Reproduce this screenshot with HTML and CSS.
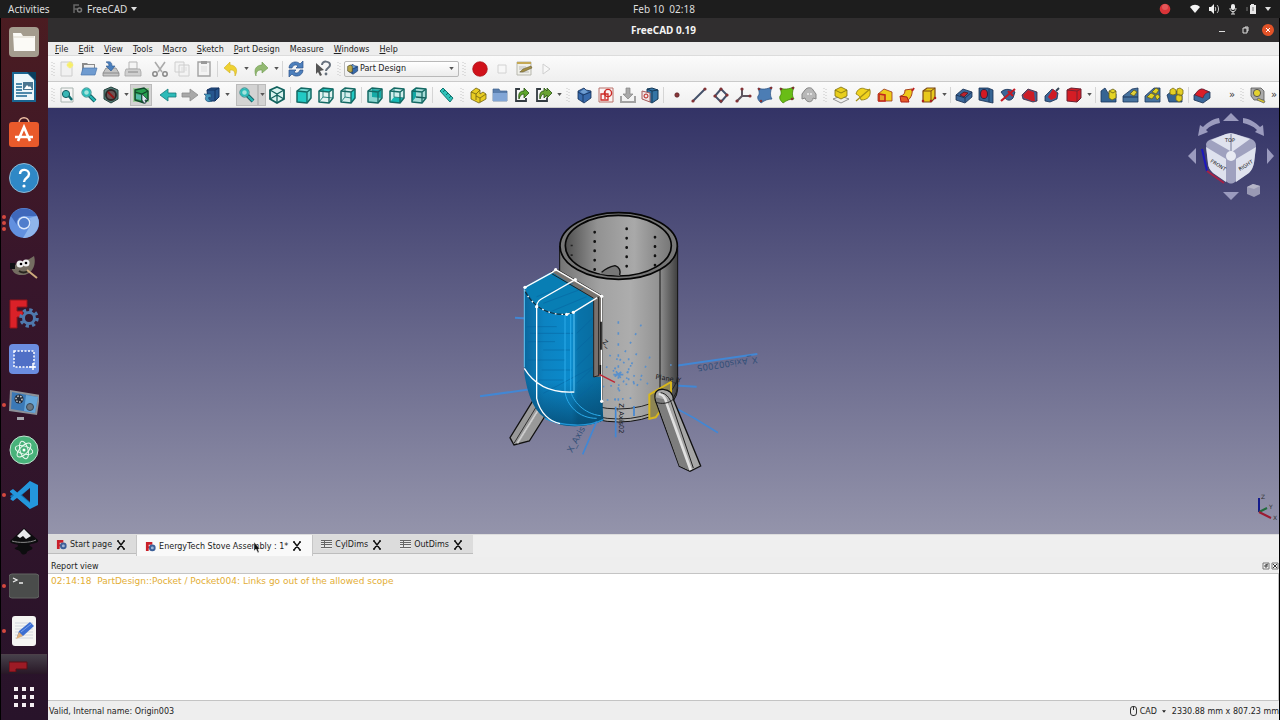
FILE: index.html
```html
<!DOCTYPE html>
<html lang="en">
<head>
    <meta charset="UTF-8">
    <meta name="viewport" content="width=device-width, initial-scale=1.0">
    <title>FreeCAD 0.19</title>
    <link rel="stylesheet" href="styles.css">
</head>
<body>
    <!-- Icon set -->
    <svg class="sprite" aria-hidden="true">
        <symbol id="new" viewBox="0 0 18 18"><path d="M3 2h11v14H3z" fill="#f1f1f1" stroke="#ccc"/><path d="M12 1l1 3 3 1-3 1-1 3-1-3-3-1 3-1z" fill="#f7ec50"/><circle cx="12" cy="5" r="3" fill="#f8ef6a" opacity=".8"/></symbol>
        <symbol id="open" viewBox="0 0 18 18"><path d="M2 3h5l1 1h7v11H2z" fill="#8a8a8a"/><path d="M4 5h10v5H4z" fill="#eee"/><path d="M3 8h14l-2 7H1z" fill="#6f9bd0" stroke="#4a76ae" stroke-width=".7"/></symbol>
        <symbol id="save" viewBox="0 0 18 18"><path d="M4 8h10l3 5v3H1v-3z" fill="#c4c4c4" stroke="#858585" stroke-width=".8"/><path d="M1 13h16" stroke="#8a8a8a"/><path d="M4 2c4-1 6 0 6 4h3l-4 5-5-5h3c0-2-1-3-3-4z" fill="#4a7fbd" stroke="#2a548b" stroke-width=".6"/></symbol>
        <symbol id="print" viewBox="0 0 18 18"><path d="M5 2h8v7H5z" fill="#f4f4f4" stroke="#b5b5b5"/><path d="M2 9h14l1 3v4H1v-4z" fill="#cfcfcf" stroke="#a5a5a5" stroke-width=".8"/><path d="M4 12h10" stroke="#888"/></symbol>
        <symbol id="cut" viewBox="0 0 18 18"><path d="M4 2l7 10M14 2L7 12" stroke="#aaa" stroke-width="1.6"/><circle cx="4" cy="14" r="2.2" fill="none" stroke="#888" stroke-width="1.5"/><circle cx="14" cy="14" r="2.2" fill="none" stroke="#888" stroke-width="1.5"/></symbol>
        <symbol id="copy" viewBox="0 0 18 18"><path d="M2 2h9v10H2zM6 5h10v11H6z" fill="#f3f3f3" stroke="#cecece"/><path d="M8 8h6M8 10h6M8 12h4" stroke="#ddd"/></symbol>
        <symbol id="paste" viewBox="0 0 18 18"><path d="M3 2h12v14H3z" fill="#f3f3f3" stroke="#a2a2a2" stroke-width="1.4"/><path d="M6 1h6v3H6z" fill="#999"/><path d="M6 7h6M6 9h6M6 11h6" stroke="#ddd"/></symbol>
        <symbol id="undo" viewBox="0 0 18 18"><path d="M2 8l6-6v3c5 0 9 4 5 11 0-5-1-6-5-6v3z" fill="#efd233" stroke="#cfae20" stroke-width=".6"/></symbol>
        <symbol id="redo" viewBox="0 0 18 18"><path d="M16 8l-6-6v3c-5 0-9 4-6 11 0-5 2-6 6-6v3z" fill="#93b972" stroke="#6d9a4d" stroke-width=".6"/></symbol>
        <symbol id="refresh" viewBox="0 0 18 18"><path d="M2 8c0-6 8-8 11-4l3-3v7H9l2-2C9 4 6 5 5 8zM16 10c0 6-8 8-11 4l-3 3v-7h7l-2 2c2 2 5 1 6-2z" fill="#4d80bd" stroke="#2d5289" stroke-width=".7"/></symbol>
        <symbol id="whats" viewBox="0 0 18 18"><path d="M2 3l8 7-4 1 2 4-2 1-2-4-2 2z" fill="#555"/><path d="M8 5c0-5 8-4 8 0 0 3-4 3-4 6" fill="none" stroke="#66707c" stroke-width="2"/><circle cx="12" cy="14" r="1.4" fill="#66707c"/></symbol>
        <symbol id="record" viewBox="0 0 18 18"><circle cx="9" cy="9" r="7.3" fill="#d0111a" stroke="#a70e14" stroke-width=".7"/></symbol>
        <symbol id="stop" viewBox="0 0 18 18"><path d="M5 5h8v8H5z" fill="#f7f7f7" stroke="#d2d2d2"/></symbol>
        <symbol id="macro" viewBox="0 0 18 18"><path d="M2 2h14v13H2z" fill="#f0f0e9" stroke="#b7b7ae"/><path d="M2 2h14v2H2z" fill="#c5a954"/><path d="M4 7h7M4 9h5M4 12h10" stroke="#bbb"/><path d="M5 12l3-3 8-3 1 2-9 4z" fill="#a28d44" stroke="#5d522a" stroke-width=".5"/></symbol>
        <symbol id="play" viewBox="0 0 18 18"><path d="M6 4l7 5-7 5z" fill="#f7f7f7" stroke="#cfcfcf"/></symbol>

        <symbol id="fitall" viewBox="0 0 18 18"><path d="M3 2h12v14H3z" fill="#f5f5f5" stroke="#a9b4b0"/><path d="M10 9l4 5" stroke="#0d6f70" stroke-width="2.4"/><circle cx="8" cy="8" r="3.6" fill="#38b7b5" stroke="#135c60"/></symbol>
        <symbol id="zoom" viewBox="0 0 18 18"><path d="M9 9l6 6" stroke="#135c60" stroke-width="4"/><path d="M10 10l5 5" stroke="#25b4b3" stroke-width="2.400"/><circle cx="6.500" cy="6.500" r="4.600" fill="#a4e3dd" stroke="#2a8284"/><circle cx="6.500" cy="6.500" r="3.200" fill="none" stroke="#2abbb8" stroke-width="1.800"/></symbol>
        <symbol id="draw" viewBox="0 0 18 18"><path d="M9 1l7 3v9l-7 4-7-4V4z" fill="#4e7a75" stroke="#27403d"/><circle cx="9" cy="9" r="5" fill="#6b5555" stroke="#2c2525" stroke-width="1.800"/><path d="M6 6l6 6" stroke="#951616" stroke-width="2"/></symbol>
        <symbol id="bbox" viewBox="0 0 18 18"><path d="M1 2h16v14H1z" fill="#9fd09b"/><path d="M3 4l9-2 4 3v9l-4 3-9-3z" fill="#289f50" stroke="#11482c" stroke-width="1.400"/><path d="M3 6l7 2 6-3M10 8v8" fill="none" stroke="#11482c" stroke-width="1.200"/><path d="M4 8l5 1v5l-5-1z" fill="#55b9a8"/><path d="M10 8l6 6-3 0 1 3-2 0-2-3z" fill="#dfe9ef" stroke="#234" stroke-width=".7"/></symbol>
        <symbol id="back" viewBox="0 0 18 18"><path d="M1 9l8-6v4h8v4H9v4z" fill="#2dbbb9" stroke="#14787a" stroke-width=".8"/></symbol>
        <symbol id="forward" viewBox="0 0 18 18"><path d="M17 9L9 3v4H1v4h8v4z" fill="#a8a8a8" stroke="#8c8c8c" stroke-width=".8"/></symbol>
        <symbol id="link" viewBox="0 0 18 18"><path d="M4 4l4-2h8v9l-4 4H5z" fill="#27568f" stroke="#143260"/><path d="M4 4h8l4-2M12 4v10" fill="none" stroke="#143260"/><path d="M8 8v4l-2-1c-1 2 0 3 3 4-5 2-8-1-6-5L1 8z" fill="#4496be" stroke="#17466c" stroke-width=".6"/></symbol>
        <symbol id="iso" viewBox="0 0 18 18"><path d="M9 1l7 3v9l-7 4-7-4V4z" fill="#d9f3f0" stroke="#12625e" stroke-width="1.800"/><path d="M2 4l7 4 7-4M9 8v9M2 13l7-4 7 4" fill="none" stroke="#12625e" stroke-width="1.300"/></symbol>
        <symbol id="wire" viewBox="0 0 18 18"><path d="M2 5l4-3 10 1v9l-4 5-10-1z" fill="none" stroke="#146964" stroke-width="1.500" stroke-linejoin="round"/><path d="M2 5l10 1 4-3M12 6v11" fill="none" stroke="#146964" stroke-width="1.300"/></symbol>
        <symbol id="v1" viewBox="0 0 18 18"><path d="M2 5l4-3 10 1v9l-4 5-10-1z" fill="#74dbd5"/><path d="M2 5l10 1v11L2 16z" fill="#22c9c4"/><use href="#wire"/></symbol>
        <symbol id="v2" viewBox="0 0 18 18"><path d="M2 5l4-3 10 1v9l-4 5-10-1z" fill="#e3f3f1"/><path d="M2 5l4-3 10 1-4 3z" fill="#22c9c4"/><path d="M6 3v8l10 1M6 11l-4 5" fill="none" stroke="#2c8883"/><use href="#wire"/></symbol>
        <symbol id="v3" viewBox="0 0 18 18"><path d="M2 5l4-3 10 1v9l-4 5-10-1z" fill="#d4efed"/><path d="M12 6l4-3v9l-4 5z" fill="#22c9c4"/><path d="M6 3v8l6 1M6 11l-4 5" fill="none" stroke="#2c8883"/><use href="#wire"/></symbol>
        <symbol id="v4" viewBox="0 0 18 18"><path d="M2 5l4-3 10 1v9l-4 5-10-1z" fill="#8ad5d0"/><path d="M6 3l9 1v8l-9-1z" fill="#15aaa6"/><use href="#wire"/></symbol>
        <symbol id="v5" viewBox="0 0 18 18"><path d="M2 5l4-3 10 1v9l-4 5-10-1z" fill="#d1efed"/><path d="M2 16l4-5 10 1-4 5z" fill="#15b9b4"/><path d="M6 3v8l10 1" fill="none" stroke="#2c8883"/><use href="#wire"/></symbol>
        <symbol id="v6" viewBox="0 0 18 18"><path d="M2 5l4-3 10 1v9l-4 5-10-1z" fill="#a7ddd9"/><path d="M2 5l4-3v9l-4 5z" fill="#12a7a4"/><path d="M6 11l10 1" stroke="#165e5b" stroke-width="1.500"/><use href="#wire"/></symbol>
        <symbol id="ruler" viewBox="0 0 18 18"><path d="M3 5l3-3 10 10-3 4z" fill="#2fc1b8" stroke="#137570"/><path d="M8 4L6 6M11 7l-2 2M14 10l-2 2" stroke="#137570"/></symbol>

        <symbol id="part" viewBox="0 0 18 18"><path d="M2 6l5-4 4 2v4l3-2 3 2v5l-7 4-8-4z" fill="#e8cc22" stroke="#6f6110" stroke-width=".8"/><path d="M2 6l5 2 4-4M7 8v6M7 10l4 2 6-4M11 12v4" fill="none" stroke="#6f6110" stroke-width=".8"/></symbol>
        <symbol id="group" viewBox="0 0 18 18"><path d="M2 3h6l1 2h7v10H2z" fill="#5a7fae" stroke="#40628e" stroke-width=".7"/><path d="M2 7h14v8H2z" fill="#82a6d6"/></symbol>
        <symbol id="export" viewBox="0 0 18 18"><path d="M7 3H3v12h10v-3" fill="none" stroke="#333b42" stroke-width="1.800"/><path d="M6 13c-1-6 1-8 5-8V2l5 5-5 5V8C8 8 7 10 6 13z" fill="#5ea52d" stroke="#26500f" stroke-width=".8"/></symbol>
        <symbol id="exports" viewBox="0 0 18 18"><path d="M6 3H2v12h10v-3" fill="none" stroke="#333b42" stroke-width="1.800"/><path d="M5 13c-1-6 1-8 4-8V2l3 3V2l5 5-5 5V9l-3 3V8C7 8 6 10 5 13z" fill="#69a332" stroke="#26500f" stroke-width=".8"/></symbol>
        <symbol id="body" viewBox="0 0 18 18"><path d="M3 5l6-3 2 2 5 1v7l-7 5-6-4z" fill="#386aab" stroke="#132d55" stroke-width=".8"/><path d="M3 6l5 3v7M8 9l8-3" fill="none" stroke="#132d55" stroke-width=".8"/><path d="M5 6l4-3 4 3-4 2z" fill="#6f9ed1"/></symbol>
        <symbol id="sketch" viewBox="0 0 18 18"><path d="M2 2h14v14H2z" fill="#faf3f2" stroke="#b9716b"/><circle cx="11" cy="7" r="3.600" fill="none" stroke="#cc2b27" stroke-width="1.400"/><path d="M4 8h7v6H4zM8 5v8" fill="none" stroke="#cc2b27" stroke-width="1.300"/></symbol>
        <symbol id="import" viewBox="0 0 18 18"><path d="M2 10v6h14v-6" fill="none" stroke="#a2a2a2" stroke-width="2"/><path d="M7 2h4v6h3l-5 5-5-5h3z" fill="#aaa" stroke="#858585" stroke-width=".7"/></symbol>
        <symbol id="map" viewBox="0 0 18 18"><path d="M6 3l5-1 6 2v9l-6 4-5-3z" fill="#3474a5" stroke="#143857"/><path d="M11 5v11M6 3l5 2 6-1" fill="none" stroke="#143857"/><path d="M1 5l8 2v9l-8-3z" fill="#efe3e4" stroke="#a55c5c"/><circle cx="5" cy="10" r="2" fill="none" stroke="#b8201c"/></symbol>
        <symbol id="point" viewBox="0 0 18 18"><circle cx="9" cy="9" r="2.200" fill="#893639" stroke="#592326" stroke-width=".7"/></symbol>
        <symbol id="line" viewBox="0 0 18 18"><path d="M3 15L15 3" stroke="#44516a" stroke-width="2"/><circle cx="3" cy="15" r="1.600" fill="#823235"/><circle cx="15" cy="3" r="1.600" fill="#823235"/></symbol>
        <symbol id="plane" viewBox="0 0 18 18"><path d="M3 10l6-7 6 6-6 7z" fill="none" stroke="#44516a" stroke-width="2"/><circle cx="3" cy="10" r="1.600" fill="#823235"/><circle cx="9" cy="3" r="1.600" fill="#823235"/><circle cx="15" cy="9" r="1.600" fill="#823235"/><circle cx="9" cy="15" r="1.600" fill="#823235"/></symbol>
        <symbol id="lcs" viewBox="0 0 18 18"><path d="M8 3v7l-5 5M8 10h8" fill="none" stroke="#5f5660" stroke-width="2"/><circle cx="8" cy="3" r="1.600" fill="#823235"/><circle cx="3" cy="15" r="1.600" fill="#823235"/><circle cx="16" cy="10" r="1.600" fill="#823235"/></symbol>
        <symbol id="shape" viewBox="0 0 18 18"><path d="M2 2c4 2 9 1 14-1-2 5-2 9 0 12-4 0-7 1-11 4-2-2-4-4-3-7 2-2 1-5 0-8z" fill="#4c7db4" stroke="#325989" stroke-width=".8"/><circle cx="3" cy="3" r="1.300" fill="#823235"/><circle cx="15" cy="2" r="1.300" fill="#823235"/><circle cx="5" cy="15" r="1.300" fill="#823235"/></symbol>
        <symbol id="subshape" viewBox="0 0 18 18"><path d="M2 2c4 2 9 1 14-1-2 5-2 9 0 12-4 0-7 1-11 4-2-2-4-4-3-7 2-2 1-5 0-8z" fill="#69bd16" stroke="#438109" stroke-width=".8"/><circle cx="3" cy="3" r="1.300" fill="#823235"/><circle cx="15" cy="2" r="1.300" fill="#823235"/><circle cx="14" cy="13" r="1.300" fill="#823235"/></symbol>
        <symbol id="clone" viewBox="0 0 18 18"><path d="M5 4c2-3 7-3 8 0l3 4v5l-3-1c0 5-7 5-8 0l-3 1V8z" fill="#b8b8b8" stroke="#868686"/><circle cx="8" cy="8" r="1" fill="#eee"/><circle cx="11" cy="8" r="1" fill="#eee"/></symbol>

        <symbol id="pad" viewBox="0 0 18 18"><path d="M1 13l8-3 8 3-8 4z" fill="#eee" stroke="#777" stroke-width=".8"/><path d="M3 4l6-3 6 3v6l-6 3-6-3z" fill="#e8ce1d" stroke="#796b10" stroke-width=".8"/><path d="M3 4l6 3 6-3" fill="none" stroke="#796b10" stroke-width=".8"/></symbol>
        <symbol id="revolve" viewBox="0 0 18 18"><path d="M2 8c1-5 6-7 9-5l5 1c1 6-2 10-9 10-1-4-3-5-5-6z" fill="#f0d31f" stroke="#87740d" stroke-width=".8"/><path d="M2 15L16 3" stroke="#a48f16" stroke-width="1.300"/></symbol>
        <symbol id="loft" viewBox="0 0 18 18"><path d="M2 8l6-5 8 3v9H2z" fill="#edcb1c" stroke="#9a361f" stroke-width=".8"/><path d="M3 8l6 1v6H3z" fill="#e5a32b" stroke="#c2251e" stroke-width="1.600"/></symbol>
        <symbol id="pipe" viewBox="0 0 18 18"><path d="M3 10c3-1 4-3 4-6l7-1c1 6-2 10-6 13z" fill="#edc91c" stroke="#a63d1d"/><path d="M2 10l7 1 2 5-8 0z" fill="#e55a28" stroke="#a91d17"/><path d="M14 5l2-3" stroke="#b22" stroke-width="2"/></symbol>
        <symbol id="box" viewBox="0 0 18 18"><path d="M3 5l4-3h8v10l-4 4H3z" fill="#e8c91d" stroke="#7c4b16" stroke-width="1.200"/><path d="M3 5h8l4-3M11 5v11" fill="none" stroke="#7c4b16"/><circle cx="3" cy="15" r="1.300" fill="#a22"/><circle cx="11" cy="15" r="1.300" fill="#a22"/><circle cx="15" cy="12" r="1.300" fill="#a22"/></symbol>

        <symbol id="pocket" viewBox="0 0 18 18"><path d="M1 9l7-6 9 3v5l-7 6-9-3z" fill="#3a6698" stroke="#172d50" stroke-width=".8"/><path d="M5 9l4-3 4 1-4 4z" fill="#bc232c" stroke="#4f1620" stroke-width=".8"/><path d="M1 9l9 3 7-6M10 12v4" fill="none" stroke="#172d50" stroke-width=".8"/></symbol>
        <symbol id="hole" viewBox="0 0 18 18"><path d="M2 2l9 0 5 2v13l-5-1-9-2z" fill="#356493" stroke="#172d50" stroke-width=".8"/><ellipse cx="7" cy="8" rx="3.500" ry="4.500" fill="#d31922" stroke="#222948"/><path d="M12 3v13" stroke="#172d50" stroke-width=".8"/></symbol>
        <symbol id="groove" viewBox="0 0 18 18"><path d="M2 6c4-4 10-3 14 0l-2 6c-3 4-8 2-9-2z" fill="#3a6698" stroke="#172d50" stroke-width=".8"/><path d="M2 15L16 3M9 5l5 5" stroke="#c31a24" stroke-width="2.200"/></symbol>
        <symbol id="sloft" viewBox="0 0 18 18"><path d="M1 9l6-6 9 3v9l-4 1-10-3z" fill="#3a6698" stroke="#472238" stroke-width=".8"/><path d="M2 9l5-5 6 2 1 9-3 0-8-3z" fill="#cc1d26"/></symbol>
        <symbol id="spipe" viewBox="0 0 18 18"><path d="M2 10l7-7 6 4-1 6-7 3-5-1z" fill="#3a6698" stroke="#172d50" stroke-width=".8"/><path d="M5 11l5-8 4 4-1 5-5 2z" fill="#d01c25"/><path d="M13 5l3-3" stroke="#345" stroke-width="2"/></symbol>
        <symbol id="sbox" viewBox="0 0 18 18"><path d="M2 4l4-2 10 1v9l-4 4-10-1z" fill="#d41d25" stroke="#672132"/><path d="M2 4l10 1 4-2M12 5v11" fill="none" stroke="#762231"/></symbol>

        <symbol id="mirror" viewBox="0 0 18 18"><path d="M1 5l4-3 3 5 8 1v8H1z" fill="#356493" stroke="#1a355a" stroke-width=".8"/><path d="M9 5l4-2 3 2v7l-4 2-3-2z" fill="#e4d423" stroke="#665d19" stroke-width=".8"/><path d="M9 5l4 2 3-2" fill="none" stroke="#665d19" stroke-width=".8"/></symbol>
        <symbol id="linear" viewBox="0 0 18 18"><path d="M1 10l9-7 6-1v14H1z" fill="#46729e" stroke="#1a355a" stroke-width=".8"/><path d="M1 11h15" stroke="#1a355a"/><path d="M8 8l4-4 3 2-3 4z" fill="#dfd03a" stroke="#665d19" stroke-width=".8"/></symbol>
        <symbol id="polar" viewBox="0 0 18 18"><path d="M1 10l9-8 6 0v14H1z" fill="#46729e" stroke="#1a355a" stroke-width=".8"/><path d="M3 11l4-4 4 2-3 4zM8 6l4-4 3 2-3 4zM11 10l3-2 2 3-3 3z" fill="#dfd023" stroke="#665d19" stroke-width=".8"/></symbol>
        <symbol id="multi" viewBox="0 0 18 18"><path d="M1 9l6-5 9 3v9H3z" fill="#356493" stroke="#1a355a" stroke-width=".8"/><path d="M4 4l3-2 3 2v4L7 9 4 8zM11 3l3-1 3 2v4l-3 2-3-2zM10 10l3-2 3 2v4l-3 2-3-2z" fill="#e4cf23" stroke="#776b18" stroke-width=".8"/></symbol>
        <symbol id="fillet" viewBox="0 0 18 18"><path d="M1 9l7-6 9 3v6l-7 5-9-3z" fill="#3a6698" stroke="#172d50" stroke-width=".8"/><path d="M2 9c2-4 4-6 8-6l6 3c-4 1-5 3-6 6z" fill="#da1e28" stroke="#672132" stroke-width=".8"/></symbol>
        <symbol id="tape" viewBox="0 0 18 18"><path d="M2 2h10l3 3v9H5l-3-4z" fill="#aaa" stroke="#555" stroke-width=".8"/><circle cx="8" cy="7" r="3.600" fill="#e4d22f" stroke="#555"/><path d="M9 12l7 3-1 2-7-3z" fill="#d8c629" stroke="#666" stroke-width=".8"/></symbol>
        <symbol id="grip" viewBox="0 0 4 18"><path d="M1 2v14M3 3v14" stroke="#c6c6c6" stroke-dasharray="1 2"/></symbol>
        <symbol id="caret" viewBox="0 0 6 4"><path d="M0 0h6L3 4z" fill="currentColor"/></symbol>

        <symbol id="fc" viewBox="0 0 30 30"><path d="M1 1h17v7H8v4h6v6H8v11H1z" fill="#da2128" stroke="#94151a"/><g fill="none" stroke="#4f79ad"><circle cx="20" cy="19" r="8" stroke-width="3.500" stroke-dasharray="3.200 3.080"/><circle cx="20" cy="19" r="5.500" stroke-width="3"/></g></symbol>
        <symbol id="fc-small" viewBox="0 0 12 12"><path d="M1 1h7v3H4v2h2v2H4v3H1z" fill="#c9202a"/><circle cx="8" cy="7.500" r="2.600" fill="#9db4d6" stroke="#3d6099" stroke-width="2"/></symbol>
        <symbol id="sheet" viewBox="0 0 11 11"><path d="M0 1h11v9H0z" fill="#e8e8e8"/><path d="M0 1.500h11M0 3.500h11M0 5.500h11M0 8.500h11M3.500 1v8" stroke="#666" fill="none"/></symbol>
        <symbol id="cross" viewBox="0 0 10 10"><path d="M2 1l6 8M8 1L2 9M1 1h2M7 1h2M1 9h2M7 9h2" stroke="#111" stroke-width="1.400"/></symbol>
    </svg>

    <header class="topbar">
        <button class="top-item">Activities</button>
        <button class="top-item app-menu">
            <svg class="app-glyph" viewBox="0 0 10 10"><path d="M1 9V1h5M1 5h3" fill="none" stroke="#666" stroke-width="1.500"/><circle cx="6.500" cy="6" r="2" fill="none" stroke="#777" stroke-width="1.500"/></svg>
            FreeCAD
            <svg class="caret"><use href="#caret"/></svg>
        </button>
        <time class="clock">Feb 10&nbsp; 02:18</time>
        <div class="tray">
            <svg class="rec" viewBox="0 0 12 12"><circle cx="6" cy="6" r="5.300" fill="#d93438"/><circle cx="6" cy="4" r="3" fill="#ea6e6e" opacity=".6"/></svg>
            <svg viewBox="0 0 12 12"><path d="M1 4c3-3 7-3 10 0l-5 6z" fill="#f2f2f2"/></svg>
            <svg viewBox="0 0 12 12"><path d="M1 4h2l3-3v10L3 8H1z" fill="#f2f2f2"/><path d="M7 4c1 1 1 3 0 4M9 2c2 2 2 6 0 8" fill="none" stroke="#ccc"/></svg>
            <svg viewBox="0 0 12 12"><rect x="4" y="1" width="4" height="6" rx="2" fill="#eee"/><path d="M3 5c0 5 6 5 6 0M6 8v3M4 11h4" fill="none" stroke="#ddd"/></svg>
            <svg viewBox="0 0 12 12"><path d="M4 2h1V1h3v1h2v9H4z" fill="#e7e7e7"/><path d="M7 4v4" stroke="#777"/><path d="M1 4v4" stroke="#777"/></svg>
            <svg class="caret"><use href="#caret"/></svg>
        </div>
    </header>

    <div class="desktop">
        <!-- Launcher -->
        <nav class="dock">
            <ul class="apps">
                <li><button aria-label="Files"><svg viewBox="0 0 30 30"><rect width="30" height="30" rx="4" fill="#a49c8e"/><path d="M4 6h8l2 3h12v15H5z" fill="#fbfaf6"/><path d="M4 10h21" stroke="#ddd8cc"/></svg></button></li>
                <li><button aria-label="Writer"><svg viewBox="0 0 30 30"><path d="M3 0h17l7 7v23H3z" fill="#1a6591"/><path d="M5 2h14l6 6v20H5z" fill="#edf6fa"/><path d="M18 0h9v9z" fill="#0b3e5e"/><path d="M7 12h6M7 15h6M7 18h6M7 21h16M7 24h11" stroke="#1a6591" stroke-width="1.500"/><path d="M14 10h10v8H14z" fill="#4a7590"/><path d="M15 17l3-4 2 2 1-1 2 3z" fill="#fff"/></svg></button></li>
                <li><button aria-label="Software"><svg viewBox="0 0 30 30"><path d="M10 6c0-7 10-7 10 0" fill="none" stroke="#efbfa4" stroke-width="1.500"/><rect y="5" width="30" height="25" rx="3" fill="#e95a2b"/><path d="M9 24l6-14 6 14M6 20h18" fill="none" stroke="#fff" stroke-width="2.600"/></svg></button></li>
                <li><button aria-label="Help"><svg viewBox="0 0 30 30"><circle cx="15" cy="15" r="14.500" fill="#2f88c6" stroke="#8cb8d4"/><path d="M11 11c0-6 9-5 9 0 0 4-5 4-5 8" fill="none" stroke="#fff" stroke-width="2.400"/><circle cx="15" cy="23" r="1.600" fill="#fff"/></svg></button></li>
                <li class="three"><button aria-label="Chromium"><svg viewBox="0 0 30 30"><circle cx="15" cy="15" r="15" fill="#6290df"/><path d="M2 8A15 15 0 0 1 28 8H15a7 7 0 0 0-7 9z" fill="#3f68bb"/><path d="M28 8a15 15 0 0 1-14 22l7-12a7 7 0 0 0-1-8z" fill="#8fb5ec"/><circle cx="15" cy="15" r="6.500" fill="#dce9fb"/><circle cx="15" cy="15" r="5" fill="#4f7dcc"/></svg></button></li>
                <li><button aria-label="GIMP"><svg viewBox="0 0 30 30"><path d="M2 14c5 0 6-7 12-6 5-1 8-3 11-5 3 10-3 20-13 19-5 0-8-2-10-8z" fill="#746d61"/><path d="M1 10h5v6H1z" fill="#101014"/><circle cx="11" cy="11" r="3.500" fill="#eee"/><circle cx="17" cy="10" r="3.500" fill="#eee"/><circle cx="12" cy="11" r="1.300"/><circle cx="17" cy="10" r="1.300"/><path d="M10 18c3 2 6 2 9 0" stroke="#29251f" stroke-width="2" fill="none"/><path d="M18 17l10 8" stroke="#cdab7c" stroke-width="2"/></svg></button></li>
                <li><button aria-label="FreeCAD"><svg viewBox="0 0 30 30"><use href="#fc"/></svg></button></li>
                <li><button aria-label="Screenshot"><svg viewBox="0 0 30 30"><rect width="30" height="30" rx="4" fill="#6b8de0"/><path d="M5 7h20v16H5z" fill="#4f6fc6" stroke="#fff" stroke-width="1.500" stroke-dasharray="2 1.500"/><path d="M24 19v7M20 23h7" stroke="#fff" stroke-width="1.500"/></svg></button></li>
                <li class="one"><button aria-label="Recorder"><svg viewBox="0 0 30 30"><path d="M1 0l30 5-3 20L0 21z" fill="#8c9097"/><path d="M3 2l26 5-3 16L2 19z" fill="#3b79b6"/><path d="M17 5l12 2-3 16-11-2z" fill="#65a5d9"/><circle cx="10" cy="9" r="4.500" fill="#232b37"/><circle cx="10" cy="9" r="3" fill="none" stroke="#ccc" stroke-width="1.500" stroke-dasharray="1.500 1.500"/><circle cx="21" cy="17" r="3.500" fill="#6d7781" stroke="#364859"/><path d="M8 27h7v3H8z" fill="#a5a7ad"/></svg></button></li>
                <li><button aria-label="Atom"><svg viewBox="0 0 30 30"><circle cx="15" cy="15" r="14" fill="#48b27a" stroke="#c2e2d0"/><g fill="none" stroke="#eaf8ef" stroke-width="1"><ellipse cx="15" cy="15" rx="4" ry="9" transform="rotate(-15 15 15)"/><ellipse cx="15" cy="15" rx="4" ry="9" transform="rotate(45 15 15)"/><ellipse cx="15" cy="15" rx="4" ry="9" transform="rotate(105 15 15)"/></g><circle cx="15" cy="15" r="1.500" fill="#fff"/></svg></button></li>
                <li class="one"><button aria-label="Code"><svg viewBox="0 0 30 30"><path d="M21 1L3 19l-2-3 3-2 17 15z" fill="#1272b4"/><path d="M1 11l3-2 17 14V8L4 21l-3-2 20-18 8 4v20l-8 4L1 12z" fill="#2496dc"/><path d="M21 8l-8 7 8 7z" fill="#2f1528"/></svg></button></li>
                <li><button aria-label="Inkscape"><svg viewBox="0 0 30 30"><path d="M15 2L1 15c0 4 9 2 8 5-1 2-4 1-3 3 2 1 5 1 6 4 2 3 6 1 6-1 2-2 7-2 5-5-2-1-4-2-1-3 4-1 8-1 7-4z" fill="#0d0d0f"/><path d="M15 3L8 10l3 2 3-2 3 3 5-3z" fill="#e9e9ec"/><path d="M3 15c6 2 18 2 24-1" stroke="#888" fill="none"/></svg></button></li>
                <li class="one"><button aria-label="Terminal"><svg viewBox="0 0 30 30"><rect y="3" width="30" height="24" rx="3" fill="#4a4c4b" stroke="#626463"/><path d="M4 7l4 2-4 2M10 12h4" fill="none" stroke="#eee" stroke-width="1.300"/></svg></button></li>
                <li class="one"><button aria-label="Text Editor"><svg viewBox="0 0 30 30"><rect x="3" width="24" height="30" rx="3" fill="#f5f5f3"/><path d="M6 7h18M6 10h18M6 13h18M6 16h18M6 19h18M6 22h18" stroke="#d1d5dc"/><path d="M8 21l2-6L21 6l4 4-11 10z" fill="#3c6ed1"/><path d="M7 23l3-7 4 4z" fill="#dfb07b"/><path d="M12 16l10-8" stroke="#7ba2ed"/></svg></button></li>
            </ul>
            <button class="peek" aria-label="FreeCAD window"><svg viewBox="0 0 30 11"><path d="M0 1h18v7H7v3H0z" fill="#9d1b25" stroke="#580f17"/></svg></button>
            <button class="grid-btn" aria-label="Show Applications"><svg viewBox="0 0 22 22"><path d="M1 3h4M9 3h4M17 3h4M1 11h4M9 11h4M17 11h4M1 19h4M9 19h4M17 19h4" stroke="#f3eef1" stroke-width="4"/></svg></button>
        </nav>

        <main class="window">
            <div class="titlebar">
                <h1>FreeCAD 0.19</h1>
                <div class="wm">
                    <button aria-label="Minimize"><svg viewBox="0 0 12 12"><path d="M3 7.500h6" stroke="#ddd"/></svg></button>
                    <button aria-label="Restore"><svg viewBox="0 0 12 12"><path d="M4 4h4v5H4zM6 4V3h3v4H8" fill="none" stroke="#ddd"/></svg></button>
                    <button class="close" aria-label="Close"><svg viewBox="0 0 12 12"><circle cx="6" cy="6" r="6" fill="#e35328"/><path d="M4 4l4 4M8 4L4 8" stroke="#fff"/></svg></button>
                </div>
            </div>

            <nav class="menubar">
                <button><u>F</u>ile</button>
                <button><u>E</u>dit</button>
                <button><u>V</u>iew</button>
                <button><u>T</u>ools</button>
                <button><u>M</u>acro</button>
                <button><u>S</u>ketch</button>
                <button><u>P</u>art Design</button>
                <button>Measure</button>
                <button><u>W</u>indows</button>
                <button><u>H</u>elp</button>
            </nav>

            <div class="toolbar">
                <svg class="grip first"><use href="#grip"/></svg>
                <button class="tool" aria-label="New"><svg><use href="#new"/></svg></button>
                <button class="tool" aria-label="Open"><svg><use href="#open"/></svg></button>
                <button class="tool" aria-label="Save"><svg><use href="#save"/></svg></button>
                <button class="tool" aria-label="Print"><svg><use href="#print"/></svg></button>
                <i class="sep"></i>
                <button class="tool" aria-label="Cut"><svg><use href="#cut"/></svg></button>
                <button class="tool" aria-label="Copy"><svg><use href="#copy"/></svg></button>
                <button class="tool" aria-label="Paste"><svg><use href="#paste"/></svg></button>
                <i class="sep line"></i>
                <button class="tool" aria-label="Undo"><svg><use href="#undo"/></svg></button>
                <button class="drop" aria-label="Undo list"><svg><use href="#caret"/></svg></button>
                <button class="tool" aria-label="Redo"><svg><use href="#redo"/></svg></button>
                <button class="drop" aria-label="Redo list"><svg><use href="#caret"/></svg></button>
                <i class="sep line"></i>
                <button class="tool" aria-label="Refresh"><svg><use href="#refresh"/></svg></button>
                <i class="sep"></i>
                <button class="tool" aria-label="What's this"><svg><use href="#whats"/></svg></button>
                <svg class="grip"><use href="#grip"/></svg>
                <div class="workbench">
                    <svg class="wb-icon" viewBox="0 0 18 18"><use href="#body"/><path d="M1 5l4-2 3 2v8l-3 1-4-2z" fill="#b9a84b" stroke="#56512c"/></svg>
                    <select aria-label="Workbench"><option>Part Design</option></select>
                    <svg class="wb-caret"><use href="#caret"/></svg>
                </div>
                <svg class="grip"><use href="#grip"/></svg>
                <button class="tool" aria-label="Record macro"><svg><use href="#record"/></svg></button>
                <button class="tool" aria-label="Stop macro"><svg><use href="#stop"/></svg></button>
                <button class="tool" aria-label="Macros"><svg><use href="#macro"/></svg></button>
                <button class="tool" aria-label="Run macro"><svg><use href="#play"/></svg></button>
            </div>

            <div class="toolbar">
                <svg class="grip first"><use href="#grip"/></svg>
                <button class="tool" aria-label="Fit all"><svg><use href="#fitall"/></svg></button>
                <button class="tool" aria-label="Fit selection"><svg><use href="#zoom"/></svg></button>
                <button class="tool" aria-label="Draw style"><svg><use href="#draw"/></svg></button>
                <button class="drop" aria-label="Draw styles"><svg><use href="#caret"/></svg></button>
                <button class="tool on" aria-label="Bounding box"><svg><use href="#bbox"/></svg></button>
                <i class="sep"></i>
                <button class="tool" aria-label="Back"><svg><use href="#back"/></svg></button>
                <button class="tool" aria-label="Forward"><svg><use href="#forward"/></svg></button>
                <button class="tool" aria-label="Go to link"><svg><use href="#link"/></svg></button>
                <button class="drop" aria-label="Link actions"><svg><use href="#caret"/></svg></button>
                <i class="sep"></i>
                <button class="tool on" aria-label="Zoom"><svg><use href="#zoom"/></svg></button>
                <button class="drop on" aria-label="Zoom modes"><svg><use href="#caret"/></svg></button>
                <button class="tool" aria-label="Isometric"><svg><use href="#iso"/></svg></button>
                <i class="sep line"></i>
                <button class="tool" aria-label="Front"><svg><use href="#v1"/></svg></button>
                <button class="tool" aria-label="Top"><svg><use href="#v2"/></svg></button>
                <button class="tool" aria-label="Right"><svg><use href="#v3"/></svg></button>
                <i class="sep line"></i>
                <button class="tool" aria-label="Rear"><svg><use href="#v4"/></svg></button>
                <button class="tool" aria-label="Bottom"><svg><use href="#v5"/></svg></button>
                <button class="tool" aria-label="Left"><svg><use href="#v6"/></svg></button>
                <i class="sep line"></i>
                <button class="tool" aria-label="Measure distance"><svg><use href="#ruler"/></svg></button>
                <svg class="grip"><use href="#grip"/></svg>
                <button class="tool" aria-label="Part"><svg><use href="#part"/></svg></button>
                <button class="tool" aria-label="Group"><svg><use href="#group"/></svg></button>
                <button class="tool" aria-label="Make link"><svg><use href="#export"/></svg></button>
                <button class="tool" aria-label="Make sub-link"><svg><use href="#exports"/></svg></button>
                <button class="drop" aria-label="Link types"><svg><use href="#caret"/></svg></button>
                <svg class="grip"><use href="#grip"/></svg>
                <button class="tool" aria-label="Body"><svg><use href="#body"/></svg></button>
                <button class="tool" aria-label="Sketch"><svg><use href="#sketch"/></svg></button>
                <button class="tool" aria-label="Edit sketch"><svg><use href="#import"/></svg></button>
                <button class="tool" aria-label="Map sketch"><svg><use href="#map"/></svg></button>
                <i class="sep line"></i>
                <button class="tool" aria-label="Datum point"><svg><use href="#point"/></svg></button>
                <button class="tool" aria-label="Datum line"><svg><use href="#line"/></svg></button>
                <button class="tool" aria-label="Datum plane"><svg><use href="#plane"/></svg></button>
                <button class="tool" aria-label="Coordinate system"><svg><use href="#lcs"/></svg></button>
                <button class="tool" aria-label="Shape binder"><svg><use href="#shape"/></svg></button>
                <button class="tool" aria-label="Sub-shape binder"><svg><use href="#subshape"/></svg></button>
                <button class="tool" aria-label="Clone"><svg><use href="#clone"/></svg></button>
                <svg class="grip"><use href="#grip"/></svg>
                <button class="tool" aria-label="Pad"><svg><use href="#pad"/></svg></button>
                <button class="tool" aria-label="Revolution"><svg><use href="#revolve"/></svg></button>
                <button class="tool" aria-label="Additive loft"><svg><use href="#loft"/></svg></button>
                <button class="tool" aria-label="Additive pipe"><svg><use href="#pipe"/></svg></button>
                <button class="tool" aria-label="Additive box"><svg><use href="#box"/></svg></button>
                <button class="drop" aria-label="Additive shapes"><svg><use href="#caret"/></svg></button>
                <i class="sep line"></i>
                <button class="tool" aria-label="Pocket"><svg><use href="#pocket"/></svg></button>
                <button class="tool" aria-label="Hole"><svg><use href="#hole"/></svg></button>
                <button class="tool" aria-label="Groove"><svg><use href="#groove"/></svg></button>
                <button class="tool" aria-label="Subtractive loft"><svg><use href="#sloft"/></svg></button>
                <button class="tool" aria-label="Subtractive pipe"><svg><use href="#spipe"/></svg></button>
                <button class="tool" aria-label="Subtractive box"><svg><use href="#sbox"/></svg></button>
                <button class="drop" aria-label="Subtractive shapes"><svg><use href="#caret"/></svg></button>
                <i class="sep line"></i>
                <button class="tool" aria-label="Mirrored"><svg><use href="#mirror"/></svg></button>
                <button class="tool" aria-label="Linear pattern"><svg><use href="#linear"/></svg></button>
                <button class="tool" aria-label="Polar pattern"><svg><use href="#polar"/></svg></button>
                <button class="tool" aria-label="MultiTransform"><svg><use href="#multi"/></svg></button>
                <i class="sep line"></i>
                <button class="tool" aria-label="Fillet"><svg><use href="#fillet"/></svg></button>
                <button class="more push" aria-label="More">»</button>
                <svg class="grip"><use href="#grip"/></svg>
                <button class="tool" aria-label="Measure"><svg><use href="#tape"/></svg></button>
                <button class="more" aria-label="More">»</button>
            </div>

            <!-- 3D view -->
            <section class="viewport">
                <svg class="scene" viewBox="48 108 1231 426">
                    <defs>
                        <linearGradient id="wall"><stop offset="0" stop-color="#747474"/><stop offset=".35" stop-color="#a3a3a3"/><stop offset=".6" stop-color="#adadad"/><stop offset=".84" stop-color="#939393"/><stop offset="1" stop-color="#3f3f3f"/></linearGradient>
                        <linearGradient id="bore"><stop offset="0" stop-color="#505050"/><stop offset=".3" stop-color="#929292"/><stop offset=".65" stop-color="#a9a9a9"/><stop offset="1" stop-color="#777"/></linearGradient>
                        <linearGradient id="blue"><stop offset="0" stop-color="#0a679d"/><stop offset=".25" stop-color="#0c83c1"/><stop offset=".6" stop-color="#0b8bcd"/><stop offset=".68" stop-color="#0873aa"/><stop offset="1" stop-color="#086a9c"/></linearGradient>
                        <linearGradient id="under" x1="0" y1="0" x2="0" y2="1"><stop offset=".7" stop-color="#053f63" stop-opacity="0"/><stop offset="1" stop-color="#053f63" stop-opacity=".7"/></linearGradient>
                    </defs>
                    <svg x="470" y="200" width="300" height="280" viewBox="0 0 900 840">
                        <!-- axes behind the part -->
                        <path d="M30 589L180 568M135 353l60 4M598 500L862 462M600 556l80 4" stroke="#4287d4" stroke-width="6" fill="none"/>
                        <!-- rear leg -->
                        <path d="M190 600l48 28-60 95-46 12-12-22z" fill="#999" stroke="#111" stroke-width="4"/>
                        <path d="M204 612l-72 118M214 618l-70 110" stroke="#333" stroke-width="3"/>
                        <path d="M210 622l-68 108" stroke="#ccc" stroke-width="6"/>
                        <!-- stove body -->
                        <path d="M269 138v427a177 101 0 0 0 354 0V138z" fill="url(#wall)" stroke="#111" stroke-width="3"/>
                        <path d="M269 526a177 101 0 0 0 354 0M269 556a177 101 0 0 0 354 0" fill="none" stroke="#222" stroke-width="3"/>
                        <path d="M570 208v395" stroke="#111" stroke-width="3"/>
                        <ellipse cx="446" cy="138" rx="176" ry="100" fill="#777" stroke="#050505" stroke-width="5"/>
                        <ellipse cx="445" cy="137" rx="159" ry="91" fill="url(#bore)" stroke="#050505" stroke-width="5"/>
                        <path d="M388 222c15-17 35-22 47-27 14 5 17 18 14 32z" fill="#777"/>
                        <path d="M395 217c15-14 30-18 40-20 14 5 17 16 14 28" fill="none" stroke="#111" stroke-width="4"/>
                        <path d="M374 96v130M470 86v130M555 111v100" stroke="#111" stroke-width="8" stroke-linecap="round" stroke-dasharray="1 27"/>
                        <path d="M305 134v40" stroke="#222" stroke-width="6" stroke-dasharray="5 24"/>
                        <!-- sketch points -->
                        <g fill="none" stroke="#5a90cb" stroke-width="5">
                            <path d="M445 364v260" stroke-dasharray="7 26"/>
                            <path d="M514 374l-90 150M476 475v70M500 460l-70 150M540 470l-40 90M350 440v110" stroke-dasharray="6 24"/>
                            <path d="M418 466l80 40M408 500l90 50M330 510l70 40M398 560l100 -10M410 600l80 -6M470 515l70 40M600 495h8M322 410l20 80" stroke-dasharray="5 18"/>
                            <path d="M434 530l20-14M438 514l14 20M430 524h30"/>
                        </g>
                        <!-- selected air box -->
                        <path d="M244 216l17-8 136 80v310l-5 66-40-20V300z" fill="#77736f" stroke="#222" stroke-width="3"/>
                        <path id="airbox" d="M163 260l81-44 127 80v235h22l7 130c-40 20-110 25-150 5C200 650 175 600 163 520z" fill="url(#blue)"/>
                        <path d="M163 260l81-44 127 80v235h22l7 130c-40 20-110 25-150 5C200 650 175 600 163 520z" fill="url(#under)"/>
                        <path d="M163 264l81-48 127 80-62 40c-60 20-110-10-146-72z" fill="#087eb4"/>
                        <g stroke="#0764a0" stroke-width="3" opacity=".55"><path d="M170 380h90M180 400h130M175 425h80M220 450h80M175 480h110M215 510h90M190 540h90M220 580l150-80M320 500l48-46M320 450l48-46M320 400l48-46M320 550l48-46M320 600l48-46M200 290l110-40M220 310l120-45M230 340l120-50"/></g>
                        <path d="M285 340v235c5 40 40 80 95 80M302 337v235c5 30 40 70 90 75" fill="none" stroke="#2cabea" stroke-width="3"/>
                        <path d="M225 655c50 24 130 28 174 4" fill="none" stroke="#2196d8" stroke-width="4"/>
                        <path d="M371 298l15-6v235l-15 4z" fill="#77706d" stroke="#222" stroke-width="3"/>
                        <path d="M240 218l130 76" stroke="#222" stroke-width="3"/>
                        <path d="M163 270c25 50 70 75 125 73l22-6" fill="none" stroke="#102f3f" stroke-width="4"/>
                        <path d="M163 270c25 50 70 75 125 73l22-6" fill="none" stroke="#fff" stroke-width="4" stroke-dasharray="5 15"/>
                        <g fill="none" stroke="#fff" stroke-width="4">
                            <path d="M165 262l82-45 10-8 138 80v315M310 337l72-44M316 239l-102 58c-12 7-15 15-14 28v270c10 45 40 70 70 76M163 505c30 50 80 75 150 71"/>
                            <path d="M163 262v240M312 338v236" stroke="#5cc5f5" stroke-width="3"/>
                        </g>
                        <g fill="#fff"><circle cx="165" cy="262" r="5"/><circle cx="257" cy="209" r="5"/><circle cx="316" cy="239" r="5"/><circle cx="395" cy="289" r="5"/><circle cx="200" cy="320" r="5"/><circle cx="310" cy="337" r="5"/><circle cx="395" cy="604" r="5"/><circle cx="290" cy="343" r="5"/></g>
                        <path d="M393 365v84M391 495v30" stroke="#111" stroke-width="5"/>
                        <path d="M388 523l47 24" stroke="#bd2534" stroke-width="4"/>
                        <!-- origin planes and axes -->
                        <path d="M538 584l65-38v46l-46 60-19 4z" fill="#8d8554" stroke="#d8b71c" stroke-width="6"/>
                        <path d="M380 665l-42 98M437 620v92M492 618v30M612 622l60 32 72 44" fill="none" stroke="#4287d4" stroke-width="5"/>
                        <g class="axis-label">
                            <text transform="translate(862 470) rotate(172)">X_Axis002005</text>
                            <text transform="translate(306 760) rotate(-62)">X_Axis</text>
                            <text class="dark" transform="translate(448 610) rotate(90)">Z_Axis02</text>
                            <text class="dark" transform="translate(556 537) rotate(8)">Plane_Y</text>
                            <text class="dark" transform="translate(396 428) rotate(40)">Z_</text>
                        </g>
                        <!-- front leg -->
                        <path d="M556 600c-5-22 5-34 24-32 20 2 29 14 30 30l82 200-32 16-32-15z" fill="#a6a6a6" stroke="#111" stroke-width="4"/>
                        <path d="M556 592l36 8 68 212-32-15-64-180z" fill="#7d7d7d"/>
                        <path d="M566 582c12 0 20 12 24 28l72 200" fill="none" stroke="#e1e1e1" stroke-width="8"/>
                        <path d="M572 578c16 2 26 15 32 30l66 196M556 606c20 8 40 4 54-8" fill="none" stroke="#222" stroke-width="3"/>
                    </svg>
                </svg>

                <svg class="navcube" viewBox="1187 112 92 90">
                    <g fill="#9b9bbe">
                        <path d="M1231 113l8 8h-16zM1231 200l8-8h-16zM1188 156l8-8v16zM1274 156l-7-8v16z"/>
                        <path d="M1219 118c-7 1-12 5-16 9l-3-2-2 11 10-4-2-2c4-4 8-6 14-7zM1243 118c8 1 13 5 17 9l3-2 1 11-9-4 2-2c-4-4-9-6-14-7z"/>
                    </g>
                    <path d="M1202 149l5 22" stroke="#1c17bd" stroke-width="2"/>
                    <path d="M1207 171l17 12" stroke="#a52045" stroke-width="2"/>
                    <path d="M1206 144c1-3 3-4 6-5l14-5c3-1 6-1 9 0l14 4c5 2 7 4 7 8l-2 17c-1 5-3 8-7 11l-12 8c-3 2-5 2-8 0l-12-8c-4-3-6-5-7-10z" fill="#9fa1bf"/>
                    <path d="M1211 140l15-6c4-1 6-1 9 0l15 5-18 13zM1206 147l20 12v23l-13-9c-3-3-5-6-5-10zM1256 147l-20 12v23l13-9c3-3 4-6 5-10z" fill="#dfe2ee"/>
                    <circle cx="1231" cy="156" r="5" fill="#e8eaf3"/>
                    <path d="M1231 134v17" stroke="#777d9a"/>
                    <g class="cube-label"><text x="1225" y="142">TOP</text><text transform="translate(1210 162) rotate(32)">FRONT</text><text transform="translate(1240 171) rotate(-32)">RIGHT</text></g>
                    <path d="M1247 187l6-3 7 2v8l-6 3-7-3z" fill="#9999b4"/><path d="M1247 187l6-3 7 2-6 3z" fill="#b5b5c7"/>
                </svg>

                <svg class="axes" viewBox="0 0 24 30">
                    <path d="M4 20V6" stroke="#141b8c" stroke-width="2"/>
                    <path d="M4 20l8-4" stroke="#226b3c" stroke-width="2"/>
                    <path d="M4 20l12 6" stroke="#9b1c32" stroke-width="2"/>
                    <text x="6" y="7">Z</text><text x="14" y="17">Y</text><text x="18" y="28">X</text>
                </svg>
            </section>

            <div class="tabs">
                <div class="tab"><button class="name"><svg><use href="#fc-small"/></svg>Start page</button><button class="x" aria-label="Close tab"><svg><use href="#cross"/></svg></button></div>
                <div class="tab active">
                    <button class="name"><svg><use href="#fc-small"/></svg>EnergyTech Stove Assembly : 1*</button><button class="x" aria-label="Close tab"><svg><use href="#cross"/></svg></button>
                    <svg class="cursor" viewBox="0 0 8 12"><path d="M1 1v9l2-2 2 4 1-1-1-3h2z" fill="#111" stroke="#eee" stroke-width=".5"/></svg>
                </div>
                <div class="tab"><button class="name"><svg><use href="#sheet"/></svg>CylDims</button><button class="x" aria-label="Close tab"><svg><use href="#cross"/></svg></button></div>
                <div class="tab"><button class="name"><svg><use href="#sheet"/></svg>OutDims</button><button class="x" aria-label="Close tab"><svg><use href="#cross"/></svg></button></div>
            </div>

            <section class="report">
                <div class="report-head">
                    <h2>Report view</h2>
                    <button aria-label="Float"><svg viewBox="0 0 8 8"><path d="M1 1h6v6H1z" fill="#f4f4f4" stroke="#777"/><path d="M3 5V3h2v2zM4 3l2-1" fill="none" stroke="#444"/></svg></button>
                    <button aria-label="Close"><svg viewBox="0 0 8 8"><path d="M1 1h6v6H1z" fill="#f4f4f4" stroke="#777"/><path d="M2 2l4 4M6 2L2 6" stroke="#333"/></svg></button>
                </div>
                <pre class="log">02:14:18  PartDesign::Pocket / Pocket004: Links go out of the allowed scope</pre>
            </section>

            <footer class="status">
                <span class="message">Valid, Internal name: Origin003</span>
                <button class="nav-style">
                    <svg class="mouse" viewBox="0 0 7 10"><rect x=".5" y=".5" width="6" height="9" rx="2.500" fill="none" stroke="#333"/><path d="M3.500 1v3" stroke="#333"/></svg>
                    CAD
                    <svg class="tiny"><use href="#caret"/></svg>
                </button>
                <span>2330.88 mm x 807.23 mm</span>
            </footer>
        </main>
    </div>
</body>
</html>
```
FILE: styles.css
```css
* {
    box-sizing: border-box;
}

body {
    margin: 0;
    height: 100vh;
    display: flex;
    flex-direction: column;
    overflow: hidden;
    font-family: "DejaVu Sans", sans-serif;
    font-size: 8px;
    color: #222;
    background: #000;
}

button {
    border: none;
    padding: 0;
    margin: 0;
    background: none;
    font: inherit;
    color: inherit;
}

svg {
    display: block;
    flex: none;
}

.sprite {
    display: none;
}

/* Gnome top bar */
.topbar {
    height: 18px;
    flex: none;
    display: grid;
    grid-template-columns: 1fr auto 1fr;
    align-items: center;
    padding: 0 9px 0 8px;
    background: #1d1d1d;
    color: #dedede;
    font-family: "Noto Sans", sans-serif;
    font-size: 10px;
}

.top-item {
    grid-row: 1;
    grid-column: 1;
    justify-self: start;
}

.app-menu {
    display: flex;
    align-items: center;
    gap: 4px;
    margin-left: 65px;
}

.app-glyph {
    width: 10px;
    height: 10px;
}

.caret {
    width: 6px;
    height: 4px;
}

.clock {
    grid-column: 2;
    padding-left: 48px;
    margin-right: -1px;
    margin-left: 0;
}

.tray {
    grid-column: 3;
    justify-self: end;
    display: flex;
    align-items: center;
    gap: 7px;
}

.tray svg {
    width: 12px;
    height: 12px;
}

.tray .rec {
    margin-right: 11px;
}

.tray .caret {
    width: 6px;
    height: 4px;
}

.desktop {
    flex: 1;
    min-height: 0;
    display: flex;
}

/* Launcher */
.dock {
    width: 48px;
    flex: none;
    display: flex;
    flex-direction: column;
    padding: 1px 1px 0 0;
    border-left: 1px solid #000;
    background: linear-gradient(#4b1c21, #38162b 35%, #28132a);
}

.apps {
    flex: 1;
    display: flex;
    flex-direction: column;
    list-style: none;
    margin: 0;
    padding: 0;
}

.apps li {
    flex: 1;
    display: flex;
    align-items: center;
    justify-content: center;
    position: relative;
}

.apps svg {
    width: 30px;
    height: 30px;
}

.apps .one::before,
.apps .three::before {
    content: "";
    position: absolute;
    left: 1px;
    width: 4px;
    height: 4px;
    border-radius: 50%;
    background: #d5493f;
}

.apps .three::before {
    box-shadow: 0 -6px #d5493f, 0 6px #d5493f;
}

.peek {
    height: 20px;
    display: flex;
    justify-content: center;
    align-items: flex-end;
    padding-bottom: 2px;
    border-top: 1px solid #4c4049;
    background: linear-gradient(#46404a, #281726);
}

.peek svg {
    width: 30px;
    height: 11px;
}

.grid-btn {
    height: 46px;
    display: flex;
    align-items: center;
    justify-content: center;
}

.grid-btn svg {
    width: 22px;
    height: 22px;
}

/* FreeCAD window */
.window {
    flex: 1;
    min-width: 0;
    display: flex;
    flex-direction: column;
    border-right: 1px solid #000;
    background: #eee;
}

.titlebar {
    height: 24px;
    flex: none;
    display: flex;
    align-items: center;
    background: #302e2f;
    color: #f4f4f4;
    font-family: "Noto Sans", sans-serif;
    position: relative;
}

.titlebar h1 {
    flex: 1;
    margin: 0;
    text-align: center;
    font-size: 10px;
    font-weight: bold;
}

.wm {
    position: absolute;
    right: 5px;
    display: flex;
    gap: 11px;
}

.wm svg {
    width: 12px;
    height: 12px;
}

.menubar {
    height: 14px;
    flex: none;
    display: flex;
    align-items: center;
    padding: 2px 0 0 2px;
    border-bottom: 1px solid #dcdcdc;
    background: #ededed;
}

.menubar button {
    padding: 0 5px;
}

u {
    text-underline-offset: 1px;
}

.toolbar {
    height: 26px;
    flex: none;
    display: flex;
    align-items: center;
    border-bottom: 1px solid #cacaca;
    background: linear-gradient(#fbfbfb, #efefef);
}

.grip {
    width: 4px;
    height: 18px;
    margin: 0 3px;
}

.grip.first {
    margin: 0 1px 0 3px;
}

.tool {
    width: 22px;
    height: 22px;
    flex: none;
    display: flex;
    align-items: center;
    justify-content: center;
}

.tool svg {
    width: 18px;
    height: 18px;
}

.drop {
    width: 8px;
    height: 22px;
    flex: none;
    display: flex;
    align-items: center;
    justify-content: center;
    color: #555;
}

.drop svg {
    width: 5px;
    height: 3px;
}

.on {
    border: 1px solid #bbb;
    background: #d3d3d3;
}

.sep {
    width: 5px;
    height: 16px;
    flex: none;
}

.sep.line {
    background: linear-gradient(#d5d5d5, #d5d5d5) center / 1px 100% no-repeat;
}

.more {
    width: 10px;
    font-size: 10px;
    color: #333;
}

.push {
    margin-left: auto;
}

.workbench {
    width: 115px;
    height: 16px;
    position: relative;
}

.workbench select {
    display: block;
    width: 100%;
    height: 16px;
    padding: 0 15px;
    appearance: none;
    border: 1px solid #b9b9b9;
    border-radius: 2px;
    background: linear-gradient(#fff, #ececec);
    font: inherit;
    color: inherit;
}

.wb-icon {
    position: absolute;
    left: 3px;
    top: 2px;
    width: 12px;
    height: 12px;
}

.wb-caret {
    position: absolute;
    right: 5px;
    top: 6px;
    width: 5px;
    height: 3px;
    color: #555;
}

/* 3D view */
.viewport {
    flex: 1;
    min-height: 0;
    position: relative;
    background: linear-gradient(#333366, #9494ab);
}

.scene {
    width: 100%;
    height: 100%;
}

.axis-label {
    font-size: 26px;
    fill: #345078;
}

.axis-label .dark {
    font-size: 20px;
    fill: #151820;
}

.navcube {
    position: absolute;
    top: 4px;
    right: 0;
    width: 92px;
    height: 90px;
}

.cube-label {
    font-size: 5px;
    fill: #111;
}

.axes {
    position: absolute;
    right: 0;
    bottom: 12px;
    width: 24px;
    height: 30px;
    font-size: 6px;
    fill: #333;
}

/* Document tabs */
.tabs {
    height: 23px;
    flex: none;
    display: flex;
    align-items: flex-start;
    border-top: 1px solid #ddd;
    background: #efefef;
}

.tab {
    height: 19px;
    display: flex;
    align-items: center;
    gap: 4px;
    padding: 1px 10px 0 8px;
    border-bottom: 1px solid #bdbdbd;
    background: #dcdcdc;
    position: relative;
}

.tab.active {
    height: 21px;
    border: 1px solid #c6c6c6;
    border-width: 0 1px;
    background: #f9f9f9;
}

.name {
    display: flex;
    align-items: center;
    gap: 3px;
    white-space: nowrap;
}

.name svg {
    width: 11px;
    height: 11px;
}

.x svg {
    width: 10px;
    height: 10px;
}

.cursor {
    position: absolute;
    left: 116px;
    top: 6px;
    width: 8px;
    height: 12px;
}

/* Report view */
.report {
    height: 144px;
    flex: none;
    display: flex;
    flex-direction: column;
}

.report-head {
    height: 16px;
    display: flex;
    align-items: center;
    gap: 1px;
    padding: 2px 0 0 3px;
}

.report-head h2 {
    flex: 1;
    margin: 0;
    font-size: 8px;
    font-weight: normal;
}

.report-head svg {
    width: 8px;
    height: 8px;
}

.log {
    flex: 1;
    margin: 0;
    padding: 2px 3px;
    border: 1px solid #c4c4c4;
    border-left: none;
    background: #fff;
    color: #e3ae35;
    font-family: inherit;
    font-size: 9px;
    line-height: 11px;
}

.status {
    height: 19px;
    flex: none;
    display: flex;
    align-items: center;
    gap: 6px;
    padding: 1px 0 0 1px;
    white-space: nowrap;
}

.message {
    flex: 1;
}

.nav-style {
    display: flex;
    align-items: center;
    gap: 3px;
}

.mouse {
    width: 7px;
    height: 10px;
}

.tiny {
    width: 4px;
    height: 3px;
    margin-left: 2px;
}
```
